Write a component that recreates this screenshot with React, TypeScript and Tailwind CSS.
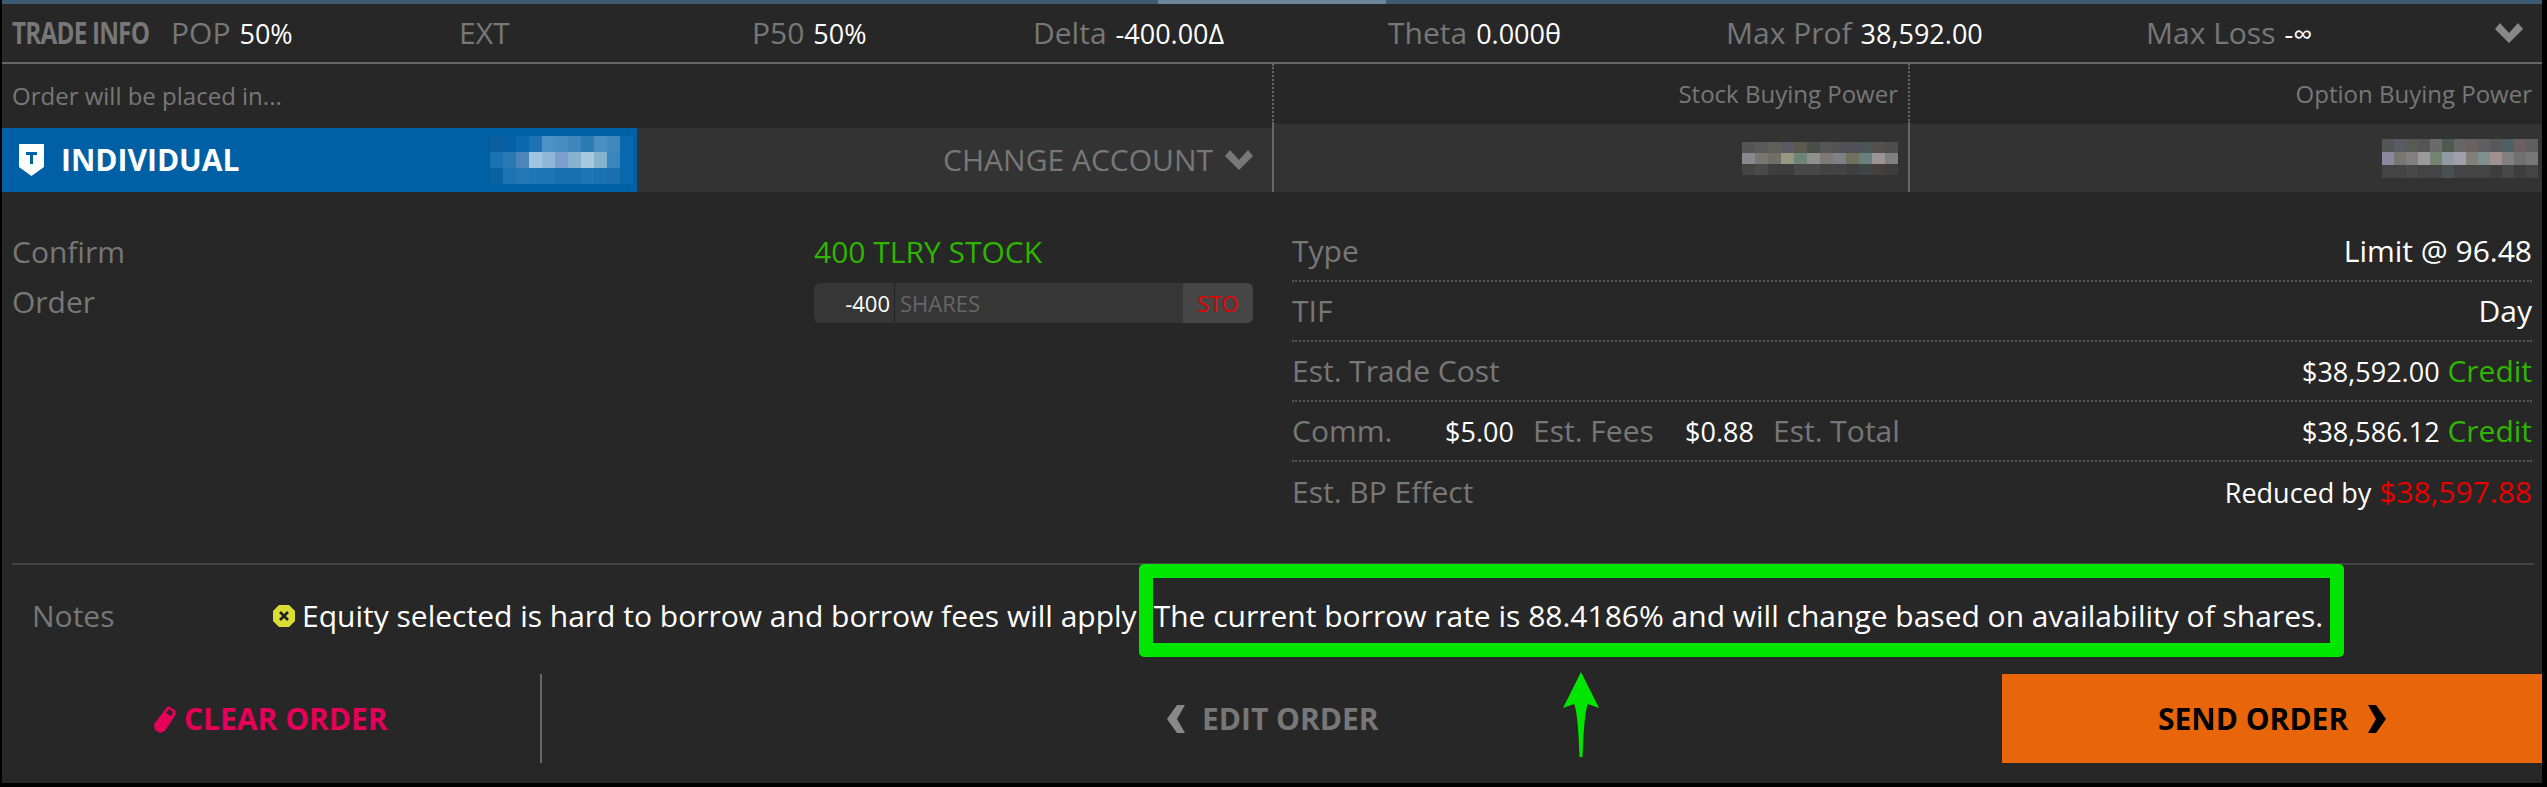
const Down = ({ className }: { className: string }) => (
  <svg viewBox="0 0 28 20" className={className} fill="currentColor"><path d="M0 6 L5 0 L14 10 L23 0 L28 6 L14 20 Z" /></svg>
);
const Side = ({ dir, className }: { dir: "l" | "r"; className: string }) => (
  <svg viewBox="0 0 20 28" className={className} fill="currentColor">
    <path d={dir === "l" ? "M18 0 L10 0 L0 14 L10 28 L18 28 L10 14 Z" : "M2 0 L10 0 L20 14 L10 28 L2 28 L10 14 Z"} />
  </svg>
);
const head = [
  { l: "POP", v: "50%", w: "w-[288px]" },
  { l: "EXT", v: "", w: "w-[293px]" },
  { l: "P50", v: "50%", w: "w-[281px]" },
  { l: "Delta", v: "-400.00Δ", w: "w-[355px]" },
  { l: "Theta", v: "0.000θ", w: "w-[338px]" },
  { l: "Max Prof", v: "38,592.00", w: "w-[420px]" },
  { l: "Max Loss", v: "-∞", w: "w-[349px]" },
];
const Mosaic = ({ rows, h, cell }: { rows: string[][]; h: number; cell: number }) => (
  <div className="flex flex-col">
    {rows.map((r, i) => (
      <div key={i} className="flex">
        {r.map((c, j) => (
          <div key={j} style={{ backgroundColor: c, width: cell, height: h }} />
        ))}
      </div>
    ))}
  </div>
);
const blueRows = [
  ["#0a5f9f", "#0660a6", "#0a68ad", "#1c72b2", "#4c92c4", "#4a8dc1", "#3f86bc", "#2c7bb5", "#4a8fc3", "#4188bd", "#0a68ad"],
  ["#1a72b0", "#2a79b2", "#4a87b8", "#a0c4dd", "#8db8d6", "#7ca0cd", "#88b2cf", "#a8c8e2", "#86b2ce", "#3a86bc", "#0a68ad"],
  ["#0a62a2", "#1c72b2", "#2478b5", "#2076b4", "#2076b4", "#1a70ae", "#1a70ae", "#2076b4", "#1a72b0", "#1a70ae", "#0a68ad"],
];
const grayA = [
  ["#555", "#5a5a5a", "#5f5f58", "#5a5a66", "#5a5a4f", "#484f48", "#565656", "#555055", "#50505a", "#4a5555", "#555050", "#4d4d4d"],
  ["#88888f", "#77776f", "#6f6f68", "#98987f", "#6f8478", "#90908f", "#7f7878", "#7f7f88", "#70705f", "#6a7f80", "#9c9494", "#808080"],
  ["#444", "#4a4a4a", "#3f3f3f", "#3d3d3d", "#484848", "#484848", "#424242", "#444448", "#404040", "#3f4444", "#444040", "#3d3d3d"],
];
const grayB = [
  ["#555", "#5a5a66", "#5a5a55", "#555", "#6a6a6a", "#4f5a4f", "#666", "#6a6060", "#5f5f5f", "#58585a", "#4f5f66", "#6a6060", "#5f5f5f"],
  ["#88889f", "#77776f", "#808080", "#9a9a9a", "#70846f", "#909aa0", "#a0a0a8", "#808078", "#7f8f8f", "#a09090", "#808080", "#707070", "#787878"],
  ["#444", "#444", "#484848", "#444", "#444", "#4a5050", "#444", "#444", "#444", "#3d3d3d", "#484848", "#3d3d3d", "#444"],
];
const Row = ({ l, children, last }: { l: string; children: React.ReactNode; last?: boolean }) => (
  <div className={`flex h-[60px] items-center justify-between ${last ? "" : "border-b-2 border-dotted border-[#555]"}`}>
    <span className="text-[#777]">{l}</span>
    <span className="text-white">{children}</span>
  </div>
);
export default function App() {
  return (
    <div className="h-[787px] w-[2547px] bg-black pl-[2px] pr-[5px] pb-[4px] text-[30px] leading-none" style={{ fontFamily: '"Open Sans", sans-serif' }}>
      <div className="relative flex h-full flex-col bg-[#272727]">
        <div className="flex h-[4px] bg-[#3c5a72]">
          <div className="ml-[1156px] w-[228px] bg-[#6d8597]" />
        </div>
        <div className="flex h-[60px] shrink-0 items-center border-b-2 border-[#666] pl-[10px]">
          <span className="w-[159px] origin-left scale-x-[0.81] whitespace-nowrap text-[30px] font-bold tracking-[-1px] text-[#777]">TRADE INFO</span>
          {head.map((h) => (
            <div key={h.l} className={`${h.w} flex items-center gap-[9px] whitespace-nowrap`}>
              <span className="text-[#777]">{h.l}</span>
              <span className="text-[27px] text-white">{h.v}</span>
            </div>
          ))}
          <Down className="h-[20px] w-[28px] text-[#888]" />
        </div>
        <div className="flex h-[128px] shrink-0 text-[24px] text-[#777]">
          <div className="flex w-[1270px] shrink-0 flex-col">
            <div className="flex h-[64px] items-center pl-[10px]">Order will be placed in...</div>
            <div className="flex h-[64px] bg-[#333]">
              <div className="flex w-[635px] items-center bg-[#0060a5] pl-[17px] text-white">
                <svg viewBox="0 0 25 32" className="h-[32px] w-[25px]">
                  <path fill="#fff" d="M0 0 H25 V23 L12.5 32 L0 23 Z" />
                  <path fill="#0060a5" d="M7 8 H18 V11 H14 V20 H11 V11 H7 Z" />
                </svg>
                <span className="ml-[17px] w-[429px] text-[30px] font-bold">INDIVIDUAL</span>
                <Mosaic rows={blueRows} h={16} cell={13} />
              </div>
              <div className="flex flex-1 items-center justify-end pr-[19px] text-[30px] text-[#777]">
                <span>CHANGE ACCOUNT</span>
                <Down className="ml-[12px] h-[20px] w-[28px]" />
              </div>
            </div>
          </div>
          <div className="flex w-[636px] shrink-0 flex-col">
            <div className="flex h-[60px] items-center justify-end border-l-2 border-dotted border-[#666] pr-[10px]">Stock Buying Power</div>
            <div className="flex h-[68px] items-center justify-end border-l-2 border-[#666] bg-[#333] pr-[10px]">
              <Mosaic rows={grayA} h={11} cell={13} />
            </div>
          </div>
          <div className="flex flex-1 flex-col">
            <div className="flex h-[60px] items-center justify-end border-l-2 border-dotted border-[#666] pr-[10px]">Option Buying Power</div>
            <div className="flex h-[68px] items-center justify-end border-l-2 border-[#666] bg-[#333] pr-[4px]">
              <Mosaic rows={grayB} h={13} cell={12} />
            </div>
          </div>
        </div>
        <div className="flex h-[371px] shrink-0 pt-[40px]">
          <div className="w-[812px] pl-[10px] text-[#777]">
            <div className="h-[50px] leading-[40px]">Confirm</div>
            <div className="leading-[40px]">Order</div>
          </div>
          <div className="w-[439px]">
            <div className="h-[51px] leading-[40px] text-[#2fb500]">400 TLRY STOCK</div>
            <div className="flex h-[40px] items-center overflow-hidden rounded-[6px] bg-[#363636] text-[22px]">
              <span className="w-[81px] border-r border-[#222] pr-[4px] text-right leading-[40px] text-white">-400</span>
              <span className="flex-1 pl-[5px] text-[#666]">SHARES</span>
              <span className="w-[70px] bg-[#464646] text-center leading-[40px] text-[#e60000]">STO</span>
            </div>
          </div>
          <div className="-mt-[10px] ml-[39px] flex-1 pr-[10px]">
            <Row l="Type">Limit @ 96.48</Row>
            <Row l="TIF">Day</Row>
            <Row l="Est. Trade Cost"><span className="text-[27px]">$38,592.00</span> <span className="text-[#2fb500]">Credit</span></Row>
            <div className="flex h-[60px] items-center justify-between border-b-2 border-dotted border-[#555]">
              <div className="flex items-center text-[#777]">
                <span className="w-[153px]">Comm.</span>
                <span className="w-[88px] text-[27px] text-white">$5.00</span>
                <span className="w-[152px]">Est. Fees</span>
                <span className="w-[88px] text-[27px] text-white">$0.88</span>
                <span>Est. Total</span>
              </div>
              <span className="text-white"><span className="text-[27px]">$38,586.12</span> <span className="text-[#2fb500]">Credit</span></span>
            </div>
            <Row l="Est. BP Effect" last><span className="text-[27px]">Reduced by</span> <span className="text-[#e60000]">$38,597.88</span></Row>
          </div>
        </div>
        <div className="mx-[10px] mr-[8px] flex h-[111px] shrink-0 items-center border-t-2 border-[#444] pb-[8px] pl-[20px]">
          <span className="w-[241px] text-[#777]">Notes</span>
          <svg viewBox="0 0 22 22" className="mr-[7px] h-[22px] w-[22px]">
            <path fill="#dcdc37" d="M6 0 H16 L22 6 V16 L16 22 H6 L0 16 V6 Z" />
            <path stroke="#222" strokeWidth="2.6" d="M7 7 L15 15 M15 7 L7 15" />
          </svg>
          <span className="whitespace-nowrap text-white">Equity selected is hard to borrow and borrow fees will apply</span>
          <span className="ml-[17px] whitespace-nowrap text-white">The current borrow rate is 88.4186% and will change based on availability of shares.</span>
        </div>
        <div className="flex h-[89px] shrink-0 items-stretch font-bold">
          <div className="flex w-[540px] items-center border-r-2 border-[#666] pl-[152px] text-[#e5005a]">
            <svg viewBox="0 0 22 28" className="mr-[8px] h-[28px] w-[22px]" fill="currentColor">
              <path fillRule="evenodd" d="M14 1 L21 5 L22 9 L11 26 L6 28 L1 25 L0 19 Z M15 4 L12 8 L17 11 L19 7 Z" />
            </svg>
            CLEAR ORDER
          </div>
          <div className="flex w-[1460px] items-center pl-[625px] text-[#777]">
            <Side dir="l" className="mr-[15px] h-[28px] w-[20px] text-[#888]" />
            EDIT ORDER
          </div>
          <div className="flex flex-1 items-center bg-[#e8650a] pl-[156px] text-black">
            SEND ORDER
            <Side dir="r" className="ml-[18px] h-[28px] w-[20px]" />
          </div>
        </div>
        <div className="pointer-events-none absolute left-[1137px] top-[564px] h-[93px] w-[1205px] rounded-[5px] border-[14px] border-[#00e600]" />
        <svg viewBox="0 0 36 86" className="pointer-events-none absolute left-[1561px] top-[672px] h-[86px] w-[36px]" fill="#00e600">
          <path d="M18 0 L36 36 L25 32 Q21 40 19.5 85 L16.5 85 Q15 40 11 32 L0 36 Z" />
        </svg>
      </div>
    </div>
  );
}
